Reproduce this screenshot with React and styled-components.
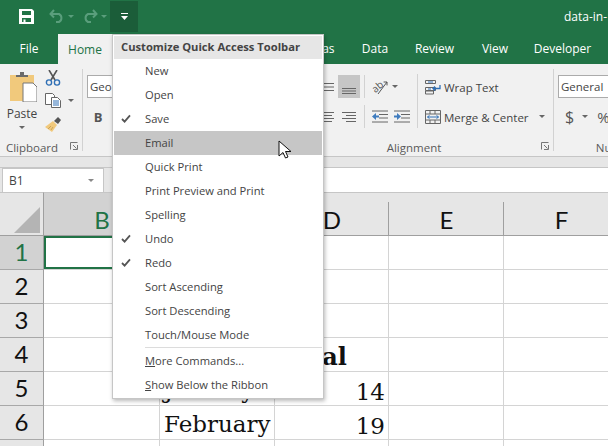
import React from "react";
import styled, { createGlobalStyle } from "styled-components";

const Global = createGlobalStyle`
  html, body { margin: 0; padding: 0; background: #fff; overflow: hidden; }
  * { box-sizing: border-box; }
`;
const UI = `"Open Sans", "Noto Sans", sans-serif`;
const SHEET = `"DejaVu Serif", "Liberation Serif", serif`;

const Page = styled.div`
  position: relative; width: 608px; height: 446px; overflow: hidden;
  display: flex; flex-direction: column; font-family: ${UI}; color: #444;
`;
const TitleBar = styled.div`
  height: 32px; background: #217346; display: flex; align-items: center; flex: none;
`;
const QatIcon = styled.span`
  display: flex; align-items: center; justify-content: center; flex: none;
  width: ${p => p.$w}px; height: 32px; margin-left: ${p => p.$ml || 0}px;
`;
const QatMenuButton = styled.span`
  display: flex; align-items: center; justify-content: center; flex: none;
  width: 28px; height: 31px; margin-left: 3px; margin-top: 1px; background: #1b5d39;
`;
const Title = styled.span`
  margin-left: auto; padding-right: 1px; color: #fff; font-size: 12px; white-space: nowrap;
`;
const TabRow = styled.div`
  height: 32px; background: #217346; display: flex; flex: none;
`;
const Tab = styled.div`
  width: ${p => p.$w}px; flex: none; display: flex; align-items: center; justify-content: center;
  font-size: 12px; color: ${p => (p.$active ? "#217346" : "#fff")};
  background: ${p => (p.$active ? "#f1f1f1" : "transparent")};
  margin-top: ${p => (p.$active ? 2 : 0)}px;
`;
const Ribbon = styled.div`
  height: 93px; flex: none; display: flex; overflow: hidden; background: #f1f1f1;
  padding: 5px 0 5px; border-bottom: 1px solid #c6c6c6;
`;
const Group = styled.div`
  position: relative; width: ${p => p.$w}px; flex: none; display: flex; flex-direction: column;
  border-right: ${p => (p.$noline ? "none" : "1px solid #d2d2d2")};
`;
const GroupBody = styled.div`
  height: 71px; flex: none; display: flex; padding-left: ${p => p.$pl || 0}px;
`;
const GroupLabel = styled.div`
  height: 16px; line-height: 16px; margin-bottom: -4px; text-align: center;
  font-size: 11.5px; color: #5a5a5a; padding-right: ${p => p.$pr || 0}px;
`;
const Launcher = styled.svg`
  position: absolute; right: ${p => p.$r}px; bottom: 1px; width: 8px; height: 8px;
`;
const PasteCol = styled.div`
  width: 30px; margin-left: 7px; padding-top: 3px; display: flex; flex-direction: column; align-items: center;
`;
const PasteLabel = styled.div`
  font-size: 12px; line-height: 16px; margin-top: 4px; color: #444;
`;
const Caret = styled.span`
  display: inline-block; flex: none; width: 0; height: 0;
  border-left: 3px solid transparent; border-right: 3px solid transparent;
  border-top: 3px solid ${p => p.$c || "#666"};
  margin: ${p => p.$m || "0"};
`;
const SmallCol = styled.div`
  margin-left: 8px; padding-top: 1px; display: flex; flex-direction: column; gap: 8px; width: 34px;
`;
const SmallRow = styled.div`
  height: 15px; display: flex; align-items: center;
`;
const StackCol = styled.div`
  display: flex; flex-direction: column; padding-top: 6px; gap: 7px;
`;
const ComboBox = styled.div`
  width: ${p => p.$w}px; height: 23px; background: #fff; border: 1px solid #ababab;
  font-size: 11.5px; line-height: 21px; padding-left: 2px; color: #444; overflow: hidden;
`;
const BoldLabel = styled.div`
  height: 23px; width: 22px; display: flex; align-items: center; justify-content: center;
  font-size: 13px; font-weight: 700; color: #555;
`;
const AlignBlock = styled.div`
  width: 142px; flex: none; padding-left: 19px; display: flex; flex-direction: column; padding-top: 6px; gap: 7px;
`;
const AlignRow = styled.div`
  display: flex; height: 23px; align-items: center;
`;
const AlignBtn = styled.span`
  width: 22px; height: 23px; flex: none; display: flex; align-items: center; justify-content: center;
  background: ${p => (p.$on ? "#c6c6c6" : "transparent")};
`;
const RowSep = styled.span`
  width: 1px; height: 23px; background: #d2d2d2; margin: 0 7px 0 4px; flex: none;
`;
const IconSpot = styled.span`
  width: 16px; height: 16px; flex: none; display: flex; margin-right: ${p => p.$mr || 0}px;
`;
const BlockSep = styled.div`
  width: 1px; height: 54px; margin-top: 5px; background: #d2d2d2; flex: none;
`;
const CmdBlock = styled.div`
  padding-left: 7px; padding-top: 6px; display: flex; flex-direction: column; gap: 7px; flex: 1;
`;
const CmdRow = styled.div`
  height: 23px; display: flex; align-items: center; font-size: 11.5px; color: #444; white-space: nowrap;
`;
const CmdText = styled.span`
  margin-left: 3px; padding-top: 1px;
`;
const Dollar = styled.span`
  font-size: 16px; margin-left: 7px; color: #555; line-height: 23px; padding-top: 1px;
`;
const Percent = styled.span`
  font-size: 15px; margin-left: 9px; color: #555;
`;
const Strip = styled.div`
  height: 11px; flex: none; background: #e6e6e6; border-bottom: 1px solid #c6c6c6;
`;
const FormulaBar = styled.div`
  height: 24px; flex: none; display: flex; background: #fff;
`;
const NameArea = styled.div`
  width: 180px; background: #e6e6e6; padding-left: 2px; flex: none;
`;
const NameBox = styled.div`
  width: 102px; height: 25px; background: #fff; border: 1px solid #c6c6c6; display: flex;
  align-items: center; justify-content: space-between; padding: 0 9px 0 6px; font-size: 12px; color: #444;
`;
const Sheet = styled.div`
  display: grid; flex: none; grid-template-columns: 44px 116px 115px 114px 115px 115px;
  grid-template-rows: 44px repeat(7, 34px);
`;
const Corner = styled.div`
  background: #e6e6e6; border-top: 1px solid #c6c6c6; border-bottom: 1px solid #9f9f9f; border-right: 1px solid #9f9f9f;
  display: flex; align-items: flex-end; justify-content: flex-end; padding: 0 3px 2px 0;
`;
const ColHead = styled.div`
  background-color: ${p => (p.$sel ? "#d2d2d2" : "#e6e6e6")};
  background-image: linear-gradient(#9f9f9f, #9f9f9f);
  background-size: 1px 33px; background-position: right bottom; background-repeat: no-repeat;
  border-top: 1px solid #c6c6c6; border-bottom: 1px solid #9f9f9f;
  color: ${p => (p.$sel ? "#217346" : "#111")};
  font-family: Lato, "Open Sans", sans-serif; font-size: 24px; line-height: 33px; padding-top: 10px; text-align: center;
`;
const RowHead = styled.div`
  background: ${p => (p.$sel ? "#d2d2d2" : "#e6e6e6")};
  border-right: 1px solid #9f9f9f; border-bottom: 1px solid #a8a8a8;
  color: ${p => (p.$sel ? "#217346" : "#111")};
  font-family: Lato, "Open Sans", sans-serif; font-size: 24px; display: flex; align-items: center; justify-content: center;
  padding-bottom: 2px;
`;
const Cell = styled.div`
  border-right: 1px solid #d4d4d4; border-bottom: 1px solid #d4d4d4; background: #fff; color: #111;
  font-family: ${SHEET}; font-size: 23px; font-weight: 400;
  display: flex; align-items: center; white-space: nowrap; padding: 3px 4px 0;
  box-shadow: ${p => (p.$sel ? "inset 0 0 0 2px #217346" : "none")};
`;
const TotalCell = styled(Cell)`
  font-weight: 700; font-size: 24px; padding-left: 5px; padding-top: 4px;
`;
const NumberCell = styled(Cell)`
  justify-content: flex-end; padding-right: 3px; padding-top: 6px;
`;
const Menu = styled.div`
  position: absolute; left: 112px; top: 34px; width: 212px; height: 365px; background: #fff;
  border: 1px solid #c6c6c6; box-shadow: 1px 2px 4px rgba(0,0,0,.28); padding: 1px;
`;
const MenuHead = styled.div`
  height: 23px; background: #e6e6e6; font-size: 11.2px; font-weight: 700; color: #444;
  line-height: 21px; padding-left: 7px; white-space: nowrap; overflow: hidden;
`;
const MenuItem = styled.div`
  height: 24px; display: flex; align-items: center; font-size: 11.2px; color: #444; white-space: nowrap;
  background: ${p => (p.$hl ? "#c6c6c6" : "transparent")};
  padding: 0 0 ${p => (p.$foot ? 0 : 2)}px 7px;
`;
const CheckSpot = styled.span`
  width: 24px; flex: none; display: flex; align-items: center;
`;
const MenuSep = styled.div`
  height: 1px; background: #dcdcdc; margin: 0 0 0 31px;
`;
const Pointer = styled.svg`
  position: absolute; left: 278px; top: 140px; width: 15px; height: 20px;
`;

const Check = () => (
  <svg width="10" height="9" viewBox="0 0 10 9"><path d="M1 5l2.6 2.6L9 1.4" fill="none" stroke="#555" strokeWidth="1.8" /></svg>
);
const Lines = ({ w = 16, ys, x = [0, 16] }) => (
  <svg width={w} height="16" viewBox={`0 0 ${w} 16`}>
    {ys.map((l, i) => <rect key={i} x={l[1] || x[0]} y={l[0]} width={l[2] || x[1]} height="1" fill="#666" />)}
  </svg>
);
const Launch = ({ r }) => (
  <Launcher $r={r} viewBox="0 0 8 8"><path d="M.5 7.5v-7h7M3 7.5h4.5V3M3 3l3.5 3.5" fill="none" stroke="#777" /></Launcher>
);
const Orientation = () => (
  <svg width="16" height="16" viewBox="0 0 16 16">
    <text x="0" y="11" fontFamily="Open Sans" fontSize="10" fill="#555" transform="rotate(-40 6 8)">ab</text>
    <path d="M6 15L15 3M15 3h-3.4M15 3v3.4" fill="none" stroke="#555" />
  </svg>
);
const Indent = ({ flip }) => (
  <svg width="16" height="16" viewBox="0 0 16 16">
    <path d="M0 2h16M7 5.5h9M7 9h9M0 13h16" stroke="#666" />
    <path d={flip ? "M0 6.5h3V4l4 3.5L3 11V8.5H0z" : "M7 6.5H4V4L0 7.5 4 11V8.5h3z"} fill="#3f7cbf" />
  </svg>
);

const items = [
  ["New"], ["Open"], ["Save", true], ["Email", false, true], ["Quick Print"], ["Print Preview and Print"],
  ["Spelling"], ["Undo", true], ["Redo", true], ["Sort Ascending"], ["Sort Descending"], ["Touch/Mouse Mode"],
];
const rows = [null, null, null, { total: true }, { label: "January", n: "14" }, { label: "February", n: "19" }, null];

export default function App() {
  return (
    <Page>
      <Global />
      <TitleBar>
        <QatIcon $w={16} $ml={18}>
          <svg width="15" height="15" viewBox="0 0 15 15">
            <path fillRule="evenodd" fill="#fff" d="M0 0h13l2 2v13H0zM3 2v4h9V2zM3 9v4h1.5v-2.5h2V13H12V9z" />
          </svg>
        </QatIcon>
        <QatIcon $w={18} $ml={14}>
          <svg width="17" height="14" viewBox="0 0 17 14"><path d="M5 1L1.5 5 5 8.5M2 5h8a4.5 4.5 0 0 1 0 8H7" fill="none" stroke="#5a9e7c" strokeWidth="2" /></svg>
        </QatIcon>
        <Caret $c="#5a9e7c" $m="0 0 0 2px" />
        <QatIcon $w={18} $ml={6}>
          <svg width="17" height="14" viewBox="0 0 17 14"><path d="M12 1l3.5 4L12 8.5M15 5H7a4.5 4.5 0 0 0 0 8h3" fill="none" stroke="#5a9e7c" strokeWidth="2" /></svg>
        </QatIcon>
        <Caret $c="#5a9e7c" $m="0 0 0 3px" />
        <QatMenuButton>
          <svg width="7" height="7" viewBox="0 0 7 7"><path d="M0 0h7v1H0zM0 3h7L3.5 7z" fill="#fff" /></svg>
        </QatMenuButton>
        <Title>data-in-</Title>
      </TitleBar>
      <TabRow>
        <Tab $w={58}>File</Tab>
        <Tab $w={54} $active>Home</Tab>
        <Tab $w={156} />
        <Tab $w={81}>Formulas</Tab>
        <Tab $w={52}>Data</Tab>
        <Tab $w={67}>Review</Tab>
        <Tab $w={54}>View</Tab>
        <Tab $w={81}>Developer</Tab>
      </TabRow>
      <Ribbon>
        <Group $w={83}>
          <GroupBody>
            <PasteCol>
              <svg width="30" height="30" viewBox="0 0 30 30">
                <rect x="3" y="3" width="24" height="26" fill="#f1c97c" />
                <path d="M9 5V3h4V0h4v3h4v2z" fill="#6b6b6b" />
                <path d="M17 11h10l4 4v15H17z" transform="translate(-1 0)" fill="#fff" stroke="#777" />
              </svg>
              <PasteLabel>Paste</PasteLabel>
              <Caret $m="4px 0 0" />
            </PasteCol>
            <SmallCol>
              <SmallRow>
                <svg width="16" height="16" viewBox="0 0 16 16">
                  <path d="M4 0l6 10M12 0L6 10" stroke="#555" strokeWidth="1.6" fill="none" />
                  <circle cx="4" cy="12.5" r="2.6" fill="none" stroke="#2f6fb5" strokeWidth="1.4" />
                  <circle cx="12" cy="12.5" r="2.6" fill="none" stroke="#2f6fb5" strokeWidth="1.4" />
                </svg>
              </SmallRow>
              <SmallRow>
                <svg width="16" height="15" viewBox="0 0 16 15">
                  <path d="M.5.5h7l2 2v9H.5z" fill="#fff" stroke="#666" />
                  <path d="M6.5 4.5h6l3 3v7h-9z" fill="#fff" stroke="#666" />
                  <path d="M8 8h6M8 10h6M8 12h6" stroke="#2f6fb5" />
                </svg>
                <Caret $m="0 0 0 7px" />
              </SmallRow>
              <SmallRow>
                <svg width="16" height="16" viewBox="0 0 16 16">
                  <path d="M0 11L8 5l4 4-5 7z" fill="#f1c97c" />
                  <path d="M9 5l4-4 3 3-3 4z" fill="#555" />
                  <path d="M3 13l3-3M6 14l2-3" stroke="#c9a25a" />
                </svg>
              </SmallRow>
            </SmallCol>
          </GroupBody>
          <GroupLabel $pr={18}>Clipboard</GroupLabel>
          <Launch r={4} />
        </Group>
        <Group $w={192}>
          <GroupBody $pl={4}>
            <StackCol>
              <ComboBox $w={140}>Georgia</ComboBox>
              <BoldLabel>B</BoldLabel>
            </StackCol>
          </GroupBody>
        </Group>
        <Group $w={279}>
          <GroupBody>
            <AlignBlock>
              <AlignRow>
                <AlignBtn><Lines ys={[[3, 1, 14], [6, 1, 14]]} /></AlignBtn>
                <AlignBtn><Lines ys={[[4, 1, 14], [7.5, 1, 14], [11, 1, 14]]} /></AlignBtn>
                <AlignBtn $on><Lines ys={[[9, 1, 14], [11.5, 1, 14], [14, 1, 14]]} /></AlignBtn>
                <RowSep />
                <IconSpot $mr={4}><Orientation /></IconSpot>
                <Caret />
              </AlignRow>
              <AlignRow>
                <AlignBtn><Lines ys={[[3, 1, 14], [6, 1, 14], [9, 1, 14], [12, 1, 14]]} /></AlignBtn>
                <AlignBtn><Lines ys={[[3, 1, 14], [6, 3, 10], [9, 1, 14], [12, 3, 10]]} /></AlignBtn>
                <AlignBtn><Lines ys={[[3, 1, 14], [6, 5, 10], [9, 1, 14], [12, 5, 10]]} /></AlignBtn>
                <RowSep />
                <IconSpot $mr={6}><Indent /></IconSpot>
                <IconSpot><Indent flip /></IconSpot>
              </AlignRow>
            </AlignBlock>
            <BlockSep />
            <CmdBlock>
              <CmdRow>
                <IconSpot>
                  <svg width="16" height="16" viewBox="0 0 16 16">
                    <path d="M.5 1.5h10v3H.5zM.5 8.5h10v3H.5zM.5 12h8v3H.5z" fill="none" stroke="#666" />
                    <path d="M3 3h5M3 10h3" stroke="#2f6fb5" />
                    <path d="M15 6v3.5H8M10 7.5L8 9.5l2 2" fill="none" stroke="#2f6fb5" strokeWidth="1.3" />
                  </svg>
                </IconSpot>
                <CmdText>Wrap Text</CmdText>
              </CmdRow>
              <CmdRow>
                <IconSpot>
                  <svg width="16" height="16" viewBox="0 0 16 16">
                    <path d="M.5 1.5h15v13H.5zM.5 5h15M.5 11h15M5 1.5V5M10 1.5V5M5 11v3.5M10 11v3.5" fill="none" stroke="#666" />
                    <path d="M2.5 8h11M2.5 8l2-1.6M2.5 8l2 1.6M13.5 8l-2-1.6M13.5 8l-2 1.6" fill="none" stroke="#2f6fb5" />
                  </svg>
                </IconSpot>
                <CmdText>Merge &amp; Center</CmdText>
                <Caret $m="0 0 0 10px" />
              </CmdRow>
            </CmdBlock>
          </GroupBody>
          <GroupLabel>Alignment</GroupLabel>
          <Launch r={4} />
        </Group>
        <Group $w={128} $noline>
          <GroupBody $pl={4}>
            <StackCol>
              <ComboBox $w={120}>General</ComboBox>
              <AlignRow>
                <Dollar>$</Dollar>
                <Caret $m="0 0 0 8px" />
                <Percent>%</Percent>
              </AlignRow>
            </StackCol>
          </GroupBody>
          <GroupLabel>Number</GroupLabel>
        </Group>
      </Ribbon>
      <Strip />
      <FormulaBar>
        <NameArea>
          <NameBox>B1<Caret $c="#888" /></NameBox>
        </NameArea>
      </FormulaBar>
      <Sheet>
        <Corner>
          <svg width="26" height="26" viewBox="0 0 26 26"><path d="M26 0v26H0z" fill="#b4b4b4" /></svg>
        </Corner>
        {["B", "C", "D", "E", "F"].map((c, i) => <ColHead key={c} $sel={i === 0}>{i === 1 ? "" : c}</ColHead>)}
        {rows.map((r, i) => (
          <React.Fragment key={i}>
            <RowHead $sel={i === 0}>{i + 1}</RowHead>
            <Cell $sel={i === 0} />
            <Cell>{r && r.label}</Cell>
            {r && r.total ? <TotalCell>Total</TotalCell> : <NumberCell>{r && r.n}</NumberCell>}
            <Cell />
            <Cell />
          </React.Fragment>
        ))}
      </Sheet>
      <Menu>
        <MenuHead>Customize Quick Access Toolbar</MenuHead>
        {items.map(([t, c, h]) => (
          <MenuItem key={t} $hl={h}>
            <CheckSpot>{c && <Check />}</CheckSpot>{t}
          </MenuItem>
        ))}
        <MenuSep />
        <MenuItem $foot><CheckSpot /><span><u>M</u>ore Commands...</span></MenuItem>
        <MenuItem $foot><CheckSpot /><span><u>S</u>how Below the Ribbon</span></MenuItem>
      </Menu>
      <Pointer viewBox="0 0 15 20">
        <path d="M1 1v15l4-3.5 2.5 5.5 2.5-1-2.5-5.5H13z" fill="#fff" stroke="#111" strokeWidth="1" />
      </Pointer>
    </Page>
  );
}
